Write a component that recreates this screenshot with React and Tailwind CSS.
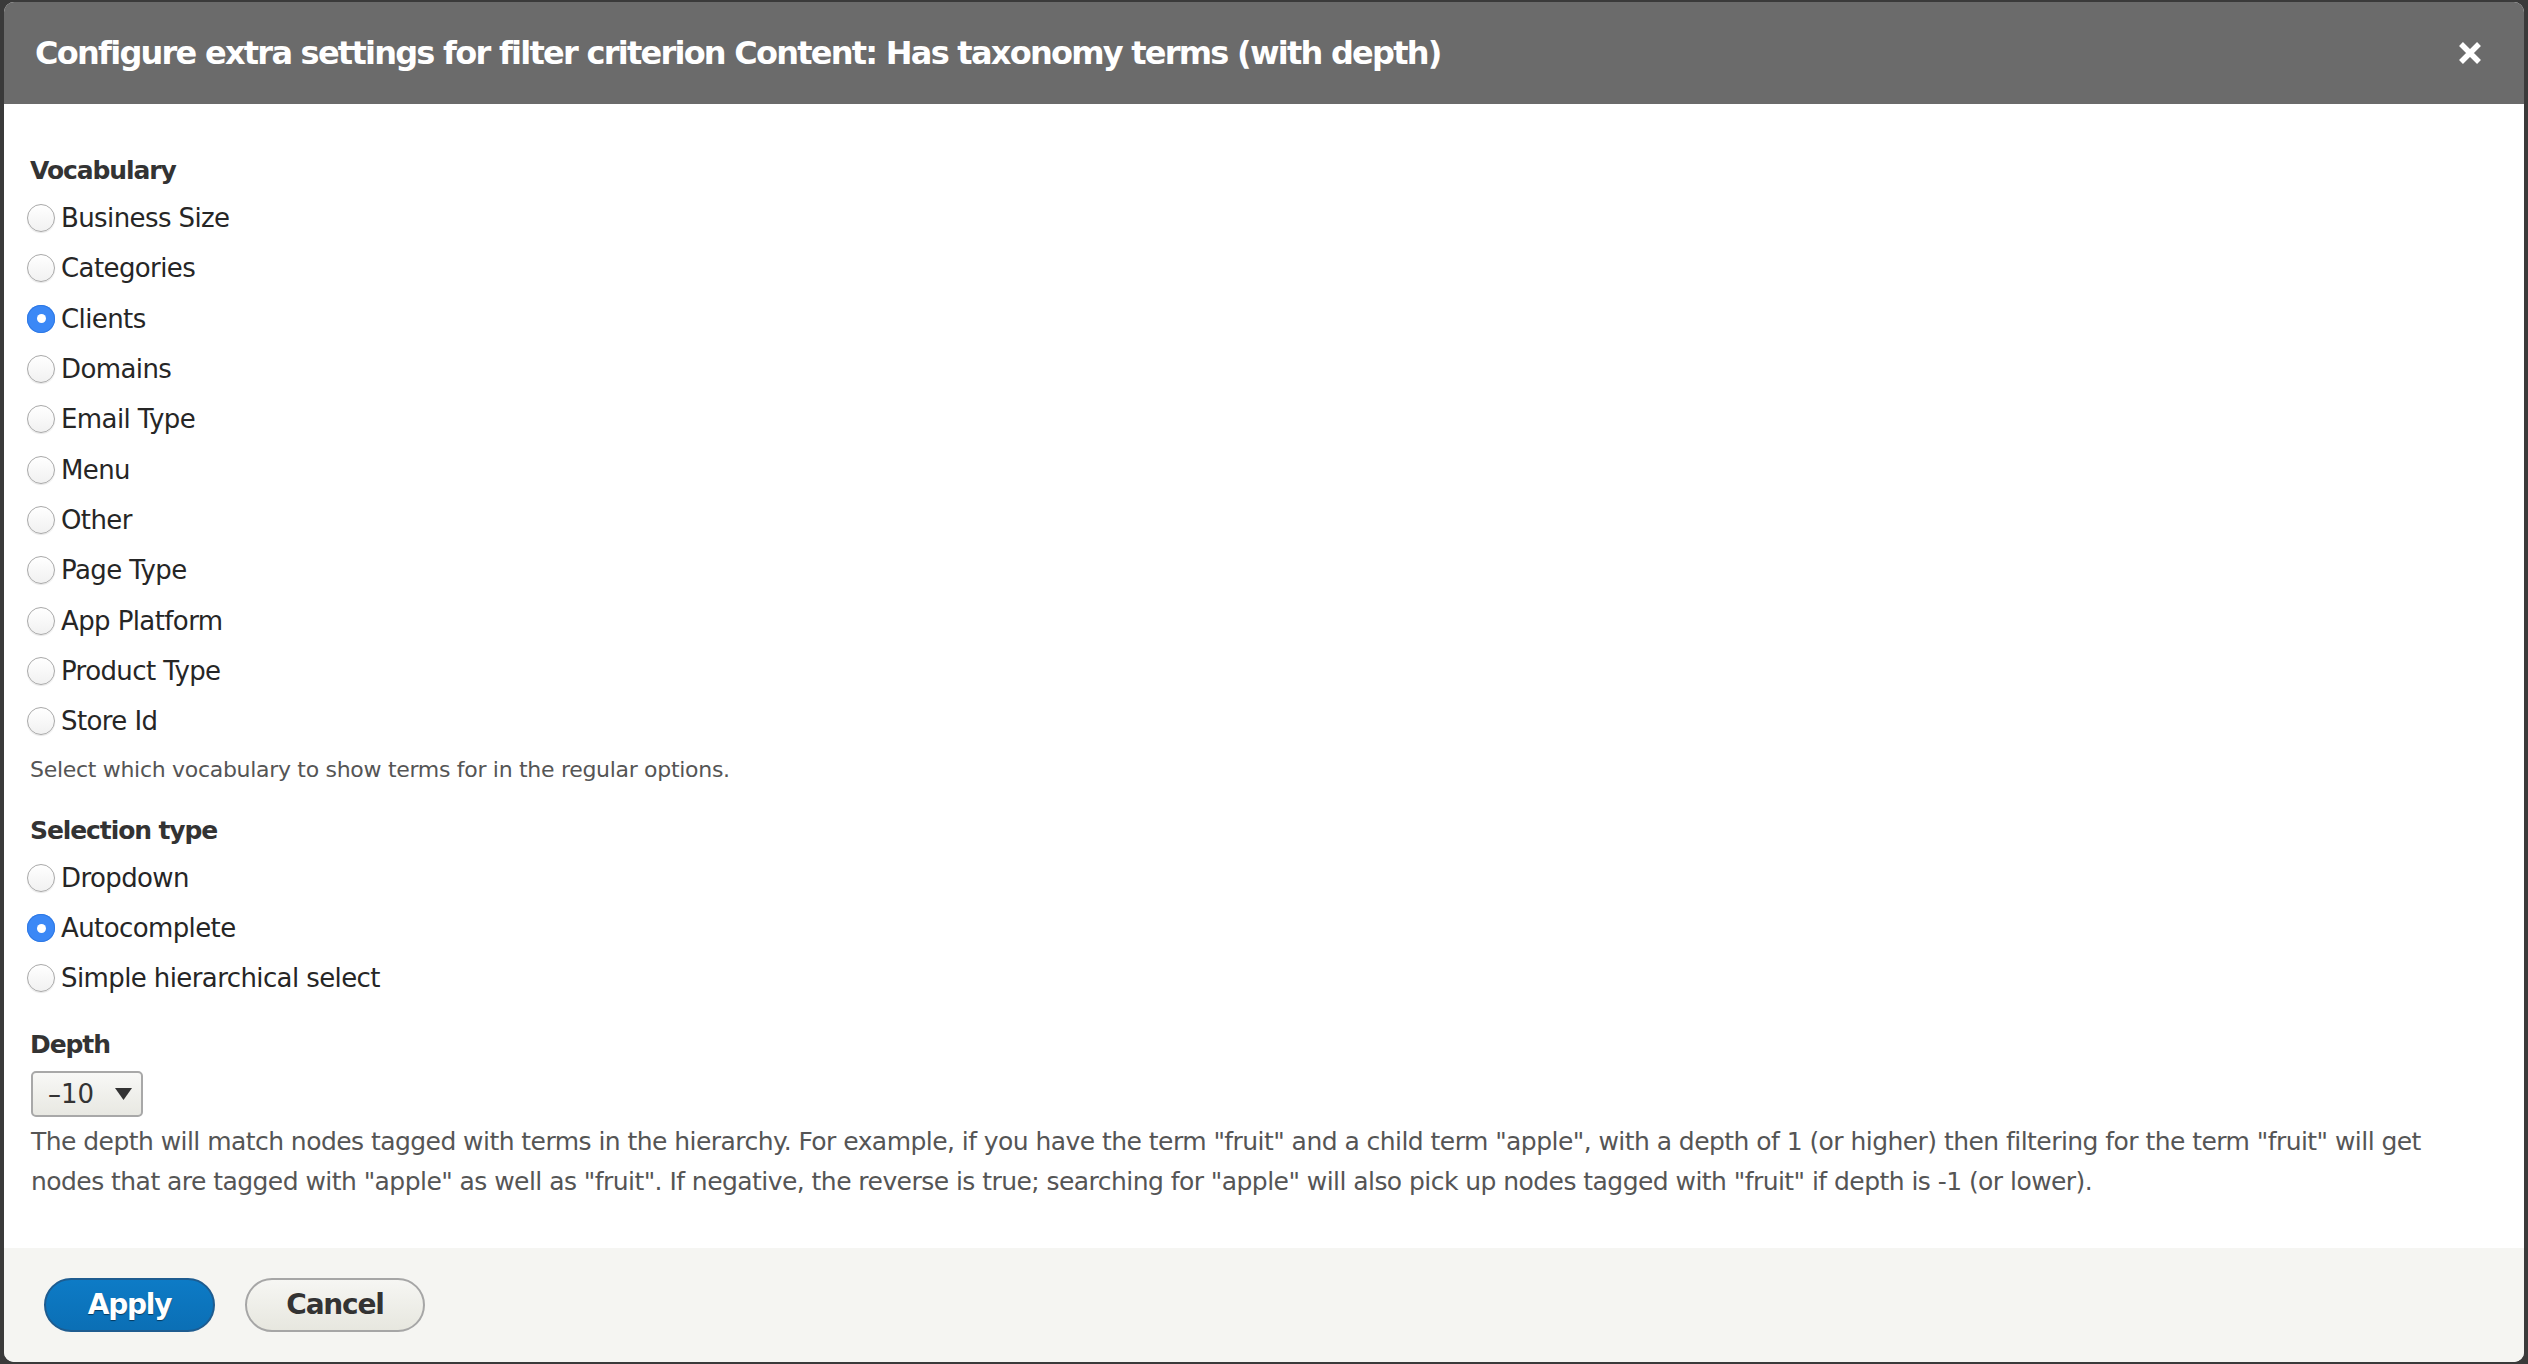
const vocabularies = [
  "Business Size",
  "Categories",
  "Clients",
  "Domains",
  "Email Type",
  "Menu",
  "Other",
  "Page Type",
  "App Platform",
  "Product Type",
  "Store Id",
];

const selectionTypes = ["Dropdown", "Autocomplete", "Simple hierarchical select"];

const Radio = ({ checked }) =>
  checked ? (
    <span className="flex h-[28px] w-[28px] shrink-0 items-center justify-center rounded-full bg-[#3b88f6] shadow-[inset_0_0_0_1px_#2f79e4]">
      <span className="h-[9px] w-[9px] rounded-full bg-white" />
    </span>
  ) : (
    <span className="h-[28px] w-[28px] shrink-0 rounded-full border-[1.5px] border-[#a9a9a9] bg-gradient-to-b from-white to-[#f1f1f1] shadow-[0_1px_1px_rgba(0,0,0,0.1)]" />
  );

const RadioRow = ({ label, checked, rowClass }) => (
  <div className={`-ml-[3px] flex items-center gap-[6px] ${rowClass}`}>
    <Radio checked={checked} />
    <span className="text-[26px] leading-[36px] text-[#262626] tracking-[-0.6px]">{label}</span>
  </div>
);

export default function App() {
  return (
    <div className="h-[1364px] w-[2528px] bg-[#3a3a3a] px-[4px] pt-[2px] font-['DejaVu_Sans',sans-serif]">
      <div className="flex h-[1360px] w-[2520px] flex-col overflow-hidden rounded-[10px] bg-white">
        {/* title bar */}
        <div className="flex h-[102px] shrink-0 items-center justify-between bg-[#6b6b6b] pl-[31px] pr-[42px]">
          <h1 className="text-[32px] font-bold leading-[40px] text-white tracking-[-1.75px]">
            Configure extra settings for filter criterion Content: Has taxonomy terms (with depth)
          </h1>
          <svg width="24" height="24" viewBox="0 0 24 24">
            <path d="M3 3 L21 21 M21 3 L3 21" stroke="white" strokeWidth="5.5" strokeLinecap="butt" />
          </svg>
        </div>

        {/* form body */}
        <div className="flex-1 px-[26px] pt-[49px]">
          <div className="text-[25px] font-bold leading-[36px] text-[#333] tracking-[-1.1px]">Vocabulary</div>
          <div className="mt-[4px] flex flex-col">
            {vocabularies.map((v) => (
              <RadioRow key={v} label={v} checked={v === "Clients"} rowClass="h-[50.3px]" />
            ))}
          </div>
          <p className="mt-[8px] text-[22px] leading-[32px] text-[#555] tracking-[-0.3px]">
            Select which vocabulary to show terms for in the regular options.
          </p>

          <div className="mt-[27px] text-[25px] font-bold leading-[36px] text-[#333] tracking-[-1.1px]">Selection type</div>
          <div className="mt-[4px] flex flex-col">
            {selectionTypes.map((s) => (
              <RadioRow key={s} label={s} checked={s === "Autocomplete"} rowClass="h-[50px]" />
            ))}
          </div>

          <div className="mt-[24px] text-[25px] font-bold leading-[36px] text-[#333] tracking-[-1.1px]">Depth</div>
          <div className="mt-[8px] ml-[1px] flex h-[46px] w-[112px] items-center justify-between rounded-[5px] border-2 border-[#a8a8a8] bg-gradient-to-b from-[#f8f8f6] to-[#e8e8e2] pl-[15px] pr-[9px]">
            <span className="text-[26px] leading-[32px] text-[#333]">–10</span>
            <svg width="17" height="12" viewBox="0 0 17 12">
              <path d="M0 0 H17 L8.5 12 Z" fill="#333" />
            </svg>
          </div>
          <p className="mt-[5px] ml-[1px] text-[25px] leading-[40px] text-[#555] tracking-[-0.55px]">
            The depth will match nodes tagged with terms in the hierarchy. For example, if you have the term "fruit" and a child term "apple", with a depth of 1 (or higher) then filtering for the term "fruit" will get
            <br />
            nodes that are tagged with "apple" as well as "fruit". If negative, the reverse is true; searching for "apple" will also pick up nodes tagged with "fruit" if depth is -1 (or lower).
          </p>
        </div>

        {/* button pane */}
        <div className="flex h-[114px] shrink-0 items-center gap-[30px] bg-[#f5f5f2] pl-[40px]">
          <button className="flex h-[54px] w-[171px] items-center justify-center rounded-full border-2 border-[#1e5c90] bg-gradient-to-b from-[#0d7bc6] to-[#0b6fb5] text-[28px] font-bold leading-[36px] text-white tracking-[-1.2px] [text-shadow:0_1px_1px_rgba(0,0,0,0.5)]">
            Apply
          </button>
          <button className="flex h-[54px] w-[180px] items-center justify-center rounded-full border-2 border-[#a6a6a6] bg-gradient-to-b from-[#f6f6f3] to-[#e7e7df] text-[28px] font-bold leading-[36px] text-[#333] tracking-[-1.2px]">
            Cancel
          </button>
        </div>
      </div>
    </div>
  );
}
